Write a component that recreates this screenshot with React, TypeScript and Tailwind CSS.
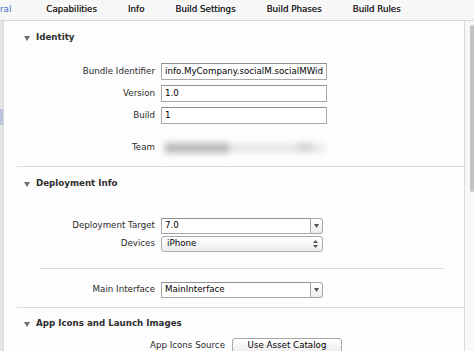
import React from 'react';

const font = { fontFamily: '"DejaVu Sans", "Noto Sans", sans-serif' };

function Triangle() {
  return (
    <svg width="6" height="5" viewBox="0 0 6 5" className="shrink-0">
      <path d="M0 0 L6 0 L3 5 Z" fill="#6e6e6e" />
    </svg>
  );
}

function SectionHeader({ title }: { title: string }) {
  return (
    <div className="flex items-center h-[14px] pl-[20px] gap-[6px]">
      <Triangle />
      <span className="font-bold text-[8.7px] text-[#2e2e2e]">{title}</span>
    </div>
  );
}

function Label({ text }: { text: string }) {
  return <div className="w-[151px] shrink-0 text-right text-[8.7px] text-[#2a2a2a]">{text}</div>;
}

function TextField({ value }: { value: string }) {
  return (
    <div className="ml-[6px] w-[166px] h-[17px] border border-[#a9a9a9] border-t-[#8f8f8f] bg-white flex items-center pl-[3px] overflow-hidden whitespace-nowrap text-[8.7px] text-black">
      {value}
    </div>
  );
}

function ComboBox({ value }: { value: string }) {
  return (
    <div className="ml-[6px] w-[162px] h-[16px] flex">
      <div className="flex-1 border border-[#a9a9a9] border-t-[#8f8f8f] bg-white flex items-center pl-[3px] text-[8.7px] text-black">
        {value}
      </div>
      <div className="w-[12px] border border-l-0 border-[#a9a9a9] rounded-r-[3px] bg-gradient-to-b from-white to-[#ececec] flex items-center justify-center">
        <svg width="5" height="4" viewBox="0 0 5 4">
          <path d="M0 0 L5 0 L2.5 4 Z" fill="#555" />
        </svg>
      </div>
    </div>
  );
}

function PopUp({ value }: { value: string }) {
  return (
    <div className="ml-[6px] w-[162px] h-[16px] rounded-[3px] border border-[#ababab] bg-gradient-to-b from-white to-[#ededed] flex items-center pl-[5px] pr-[4px] text-[8.7px] text-black">
      <span className="flex-1">{value}</span>
      <svg width="5" height="8" viewBox="0 0 5 8">
        <path d="M0 3 L5 3 L2.5 0 Z" fill="#555" />
        <path d="M0 5 L5 5 L2.5 8 Z" fill="#555" />
      </svg>
    </div>
  );
}

const tabs = ['ral', 'Capabilities', 'Info', 'Build Settings', 'Build Phases', 'Build Rules'];

export default function App() {
  return (
    <div style={font} className="w-[474px] h-[351px] overflow-hidden bg-[#f4f4f4] flex flex-col">
      {/* tab bar */}
      <div className="h-[21px] shrink-0 border-b border-[#d6d6d6] bg-[#f7f7f7] flex items-center gap-[31px] text-[8.7px] text-[#2b2b2b] [text-shadow:0_0_0.3px_#2b2b2b]">
        {tabs.map((t, i) => (
          <span key={t} className={i === 0 ? 'text-[#3470c4] [text-shadow:none] mr-[4px]' : ''}>
            {t}
          </span>
        ))}
      </div>

      <div className="flex flex-1">
        {/* sidebar sliver */}
        <div className="w-[3px] shrink-0 bg-[#e6e6e6] flex flex-col">
          <div className="h-[88px]" />
          <div className="h-[16px] bg-[#b8c4db]" />
        </div>

        {/* editor panel */}
        <div className="w-[462px] shrink-0 border-l border-r border-[#d9d9d9] bg-[#fdfdfd] flex flex-col">
          <div className="pt-[10px]">
            <SectionHeader title="Identity" />
          </div>

          <div className="mt-[18px] flex flex-col gap-[5px]">
            <div className="flex items-center">
              <Label text="Bundle Identifier" />
              <TextField value="info.MyCompany.socialM.socialMWid" />
            </div>
            <div className="flex items-center">
              <Label text="Version" />
              <TextField value="1.0" />
            </div>
            <div className="flex items-center">
              <Label text="Build" />
              <TextField value="1" />
            </div>
          </div>

          <div className="mt-[15px] h-[17px] flex items-center">
            <Label text="Team" />
            <div className="ml-[10px] w-[166px] h-[12px] flex items-center blur-[3px]">
              <div className="w-[64px] h-[10px] bg-[#b8b8b8]" />
              <div className="w-[68px] h-[8px] bg-[#e4e4e4]" />
              <div className="w-[16px] h-[9px] bg-[#d2d2d2]" />
              <div className="w-[12px] h-[8px] bg-[#e8e8e8]" />
            </div>
          </div>

          <div className="mt-[10px] ml-[13px] h-px bg-[#dcdcdc]" />

          <div className="mt-[10px]">
            <SectionHeader title="Deployment Info" />
          </div>

          <div className="mt-[27px] flex flex-col gap-[2px]">
            <div className="flex items-center">
              <Label text="Deployment Target" />
              <ComboBox value="7.0" />
            </div>
            <div className="flex items-center">
              <Label text="Devices" />
              <PopUp value="iPhone" />
            </div>
          </div>

          <div className="mt-[16px] ml-[36px] w-[404px] h-px bg-[#dcdcdc]" />

          <div className="mt-[13px] flex items-center">
            <Label text="Main Interface" />
            <ComboBox value="MainInterface" />
          </div>

          <div className="mt-[9px] ml-[13px] h-px bg-[#dcdcdc]" />

          <div className="mt-[9px]">
            <SectionHeader title="App Icons and Launch Images" />
          </div>

          <div className="mt-[7px] flex items-center">
            <div className="w-[221px] shrink-0 text-right text-[8.7px] text-[#2a2a2a]">App Icons Source</div>
            <div className="ml-[7px] w-[110px] h-[16px] rounded-[3px] border border-[#a6a6a6] bg-gradient-to-b from-white to-[#ececec] flex items-center justify-center text-[8.7px] text-black">
              Use Asset Catalog
            </div>
          </div>
        </div>

        {/* scrollbar */}
        <div className="w-[9px] shrink-0 bg-[#f8f8f8] pt-[4px] pl-[5px]">
          <div className="w-[4px] h-[167px] rounded-full bg-[#c3c3c3]" />
        </div>
      </div>
    </div>
  );
}
